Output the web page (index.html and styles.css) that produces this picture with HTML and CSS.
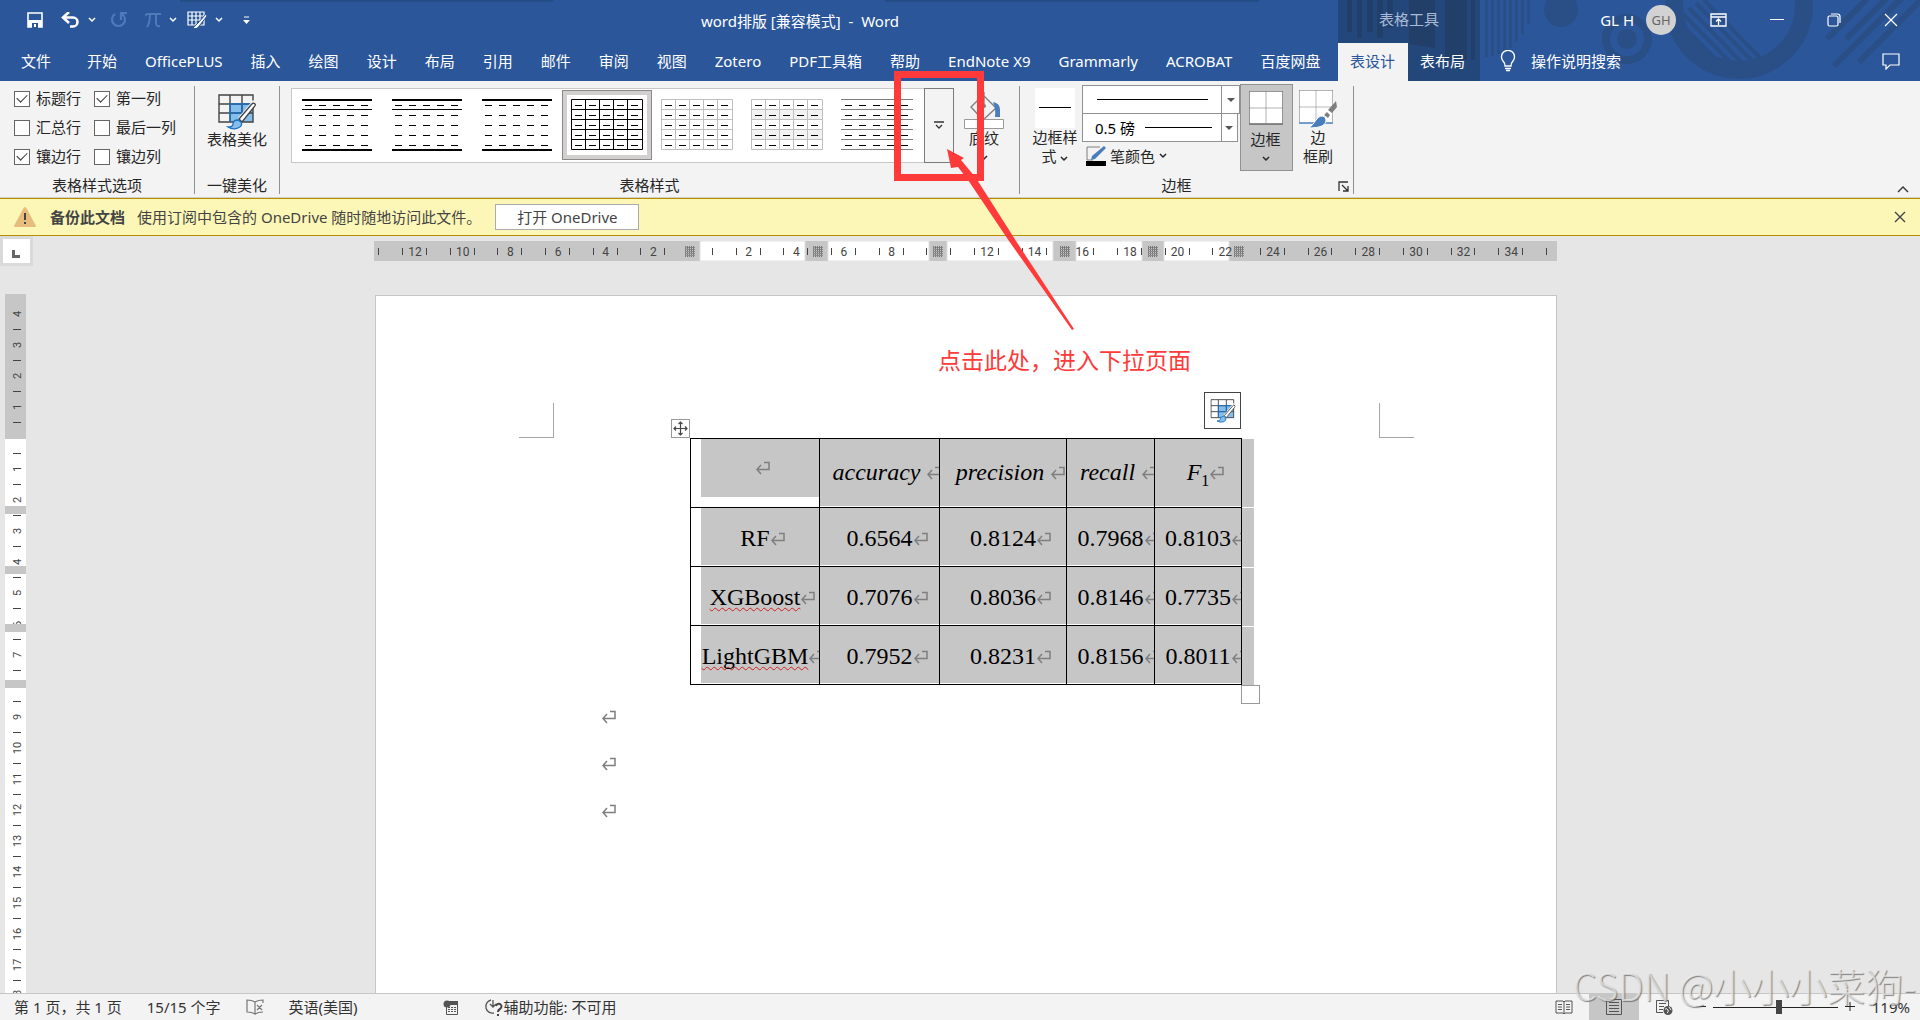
FILE: index.html
```html
<!DOCTYPE html>
<html lang="zh-CN">
<head>
    <meta charset="UTF-8">
    <meta name="viewport" content="width=device-width, initial-scale=1.0">
    <title>word排版 [兼容模式] - Word</title>
    <link rel="stylesheet" href="styles.css">
</head>
<body>
    <!-- Shared icon shapes -->
    <svg class="defs" aria-hidden="true">
        <symbol id="chev" viewBox="0 0 8 6"><path d="M1 1l3 3 3-3" fill="none" stroke="currentColor" stroke-width="1.5"/></symbol>
        <symbol id="dashes" viewBox="0 0 72 54"><path d="M4 7.500h63M4 17.500h63M4 27.500h63M4 37.500h63M4 47.500h63" stroke="#000" stroke-dasharray="7 7"/></symbol>
        <symbol id="mark" viewBox="0 0 16 14"><path d="M9 1.500h5v7H2M6 4L2 8.500l4 4.500" fill="none" stroke="#7f7f7f" stroke-width="1.500"/></symbol>
        <symbol id="beautify" viewBox="0 0 38 36">
            <path d="M12 10h23v18H12z" fill="#83beec"/>
            <path d="M1 1h34v27H1zM1 10h34M1 19h34M12 1v27M24 1v27" fill="none" stroke="#444" stroke-width="1.400"/>
            <path d="M12 28V10h23M24 10v10M12 19h12" fill="none" stroke="#1e70bd" stroke-width="1.400"/>
            <path d="M35 6L20 24l4 4L38 9z" fill="#f3f3f3"/>
            <path d="M37 10q-2-2-4 1L21 25l3 3L36 13q2-2 1-3z" fill="#fff" stroke="#444" stroke-width="1.300"/>
            <path d="M20 26q-5 0-5 4 0 3-5 3 5 3 10 1 5-2 3-6z" fill="#83beec" stroke="#1e70bd" stroke-width="1.300"/>
        </symbol>
    </svg>

    <header class="header">
        <svg class="header-art" viewBox="0 0 585 81" aria-hidden="true">
            <path class="context-bg" d="M3 0h142v81H3z"/>
            <g class="context-art">
                <path d="M12 0h5v32h-5zM22 0h5v38h-5zM32 0h6v32h-6zM42 0h6v38h-6zM62 0h38v48L74 44V0zM110 0h22v60h-22zM136 0h4v60h-4zM52 0h6v28h-6z"/>
            </g>
            <g class="art">
                <path d="M150 0h3v57h-3zM156 0h3v56h-3zM162 0h3v54h-3zM168 0h3v52h-3zM174 0h3v48h-3zM180 0h3v42h-3zM186 0h3v34h-3zM192 0h3v24h-3z"/>
                <circle cx="226" cy="10" r="17"/>
                <path fill-rule="evenodd" d="M267 39a25 25 0 1 0 50 0 25 25 0 1 0-50 0zM275 39a17 17 0 1 1 34 0 17 17 0 1 1-34 0z"/>
                <circle cx="292" cy="39" r="10"/>
            </g>
            <g class="art-lines">
                <circle cx="404" cy="5" r="65" stroke-width="18"/>
                <path stroke-width="4" d="M344 22l50 51M348 14l58 59M354 8l60 62M361 3l60 62M369 0l58 60"/>
                <path stroke-width="6" d="M492 39l40-40M511 39l40-40M499 66l68-68M524 62l62-62"/>
            </g>
        </svg>

        <div class="title-row">
            <div class="quick-access">
                <button aria-label="保存"><svg width="16" height="16" viewBox="0 0 16 16"><path d="M1 1h14v14H1z" fill="none" stroke="#fff" stroke-width="1.600"/><path d="M1 8h14v7H1z" fill="#fff"/><path d="M5 11h6v5H5z" fill="#2b579a"/><path d="M7 12h2v3H7z" fill="#fff"/></svg></button>
                <button class="undo" aria-label="撤消"><svg width="19" height="16" viewBox="0 0 19 16"><path d="M2 5.500h10a4.500 4.500 0 0 1 0 9H9M8 0L2 5.500 8 11" fill="none" stroke="#fff" stroke-width="2.600"/></svg><svg class="chev"><use href="#chev"/></svg></button>
                <button class="redo" aria-label="恢复"><svg width="17" height="17" viewBox="0 0 17 17"><path d="M5 3a6.500 6.500 0 1 0 7 0M11 9V2h6" fill="none" stroke="#4f79b8" stroke-width="2.200"/></svg></button>
                <button class="pi" aria-label="公式"><svg width="16" height="16" viewBox="0 0 16 16"><path d="M0 4q1-2 3-2h13M5 2q0 9-3 13M11 2v9q0 4 4 3" fill="none" stroke="#4f79b8" stroke-width="2"/></svg><svg class="chev"><use href="#chev"/></svg></button>
                <button class="grid-btn" aria-label="表格美化"><svg width="20" height="18" viewBox="0 0 20 18"><path d="M1 1h16v13H1zM1 5h16M1 9h16M5 1v13M9 1v13M13 1v13" fill="none" stroke="#fff" stroke-width="1.200"/><path d="M19 3l-8 9-5 5q4 2 7-3l7-9z" fill="#fff" stroke="#2b579a"/></svg><svg class="chev"><use href="#chev"/></svg></button>
                <button class="more" aria-label="自定义"><svg width="7" height="8" viewBox="0 0 7 8"><path d="M1 1h5" stroke="#fff"/><path d="M0 4h7L3.500 8z" fill="#fff"/></svg></button>
            </div>
            <h1 class="doc-title">word排版 [兼容模式]&nbsp; -&nbsp; Word</h1>
            <div class="context-title">表格工具</div>
            <div class="window-tools">
                <span class="user">GL H</span>
                <span class="avatar">GH</span>
                <button class="display-btn" aria-label="功能区显示选项"><svg width="17" height="14" viewBox="0 0 17 14"><path d="M1 1h15v12H1zM1 4h15M8.500 12V6M6 8.500L8.500 6 11 8.500" fill="none" stroke="#fff" stroke-width="1.300"/></svg></button>
                <button aria-label="最小化"><svg width="14" height="14" viewBox="0 0 14 14"><path d="M0 6.500h14" stroke="#fff"/></svg></button>
                <button aria-label="还原"><svg width="14" height="14" viewBox="0 0 14 14"><rect x="1" y="3" width="10" height="10" rx="1.500" fill="none" stroke="#fff" stroke-width="1.200"/><path d="M4 1h6.500q2.500 0 2.500 2.500V10" fill="none" stroke="#fff" stroke-width="1.200"/></svg></button>
                <button aria-label="关闭"><svg width="14" height="14" viewBox="0 0 14 14"><path d="M1 1l12 12M13 1L1 13" stroke="#fff" stroke-width="1.200"/></svg></button>
            </div>
        </div>

        <div class="tab-row">
            <nav class="tabs">
                <a class="file" href="#">文件</a>
                <a href="#">开始</a>
                <a href="#">OfficePLUS</a>
                <a href="#">插入</a>
                <a href="#">绘图</a>
                <a href="#">设计</a>
                <a href="#">布局</a>
                <a href="#">引用</a>
                <a href="#">邮件</a>
                <a href="#">审阅</a>
                <a href="#">视图</a>
                <a href="#">Zotero</a>
                <a href="#">PDF工具箱</a>
                <a href="#">帮助</a>
                <a href="#">EndNote X9</a>
                <a href="#">Grammarly</a>
                <a href="#">ACROBAT</a>
                <a href="#">百度网盘</a>
            </nav>
            <nav class="context-tabs">
                <a class="active" href="#">表设计</a>
                <a href="#">表布局</a>
            </nav>
            <div class="tell-me">
                <svg width="16" height="22" viewBox="0 0 16 22"><path d="M5 16q0-3-2-5a6.500 6.500 0 1 1 10 0q-2 2-2 5zM5 18.500h6M6 20.500h4" fill="none" stroke="#fff" stroke-width="1.400"/></svg>
                <a href="#">操作说明搜索</a>
                <button class="comment" aria-label="批注"><svg width="18" height="17" viewBox="0 0 18 17"><path d="M1 1h16v11H8l-4 4v-4H1z" fill="none" stroke="#fff" stroke-width="1.200"/></svg></button>
            </div>
        </div>
    </header>

    <section class="ribbon">
        <div class="group options">
            <div class="group-body checks">
                <label><input type="checkbox" checked>标题行</label>
                <label><input type="checkbox" checked>第一列</label>
                <label><input type="checkbox">汇总行</label>
                <label><input type="checkbox">最后一列</label>
                <label><input type="checkbox" checked>镶边行</label>
                <label><input type="checkbox">镶边列</label>
            </div>
            <div class="group-name">表格样式选项</div>
        </div>

        <div class="group beautify">
            <div class="group-body">
                <button class="big"><svg width="38" height="36"><use href="#beautify"/></svg><span>表格美化</span></button>
            </div>
            <div class="group-name">一键美化</div>
        </div>

        <div class="group styles">
            <div class="group-body">
                <div class="gallery">
                    <button aria-label="样式 1"><svg width="72" height="54"><use href="#dashes"/><path d="M1 2h70M1 52h70" stroke="#000" stroke-width="2"/><path d="M1 11.500h70" stroke="#000"/></svg></button>
                    <button aria-label="样式 2"><svg width="72" height="54"><use href="#dashes"/><path d="M1 2h70M1 52h70" stroke="#000" stroke-width="2"/><path d="M1 11.500h70" stroke="#000"/></svg></button>
                    <button aria-label="样式 3"><svg width="72" height="54"><use href="#dashes"/><path d="M1 2h70M1 52h70" stroke="#000" stroke-width="2"/></svg></button>
                    <button class="selected" aria-label="网格型"><svg width="72" height="54"><use href="#dashes"/><path d="M.5 1.500h71v50H.5zM.5 11.500h71M.5 21.500h71M.5 31.500h71M.5 41.500h71M14.500 1.500v50M28.500 1.500v50M42.500 1.500v50M56.500 1.500v50" fill="none" stroke="#000"/></svg></button>
                    <button aria-label="网格型浅色"><svg width="72" height="54"><use href="#dashes"/><path d="M.5 1.500h71v50H.5zM.5 11.500h71M.5 21.500h71M.5 31.500h71M.5 41.500h71M14.500 1.500v50M28.500 1.500v50M42.500 1.500v50M56.500 1.500v50" fill="none" stroke="#bfbfbf"/></svg></button>
                    <button aria-label="无格式表格 1"><svg width="72" height="54"><path d="M1 12h70v10H1zM1 32h70v10H1z" fill="#f2f2f2"/><use href="#dashes"/><path d="M.5 1.500h71v50H.5zM.5 11.500h71M.5 21.500h71M.5 31.500h71M.5 41.500h71M14.500 1.500v50M28.500 1.500v50M42.500 1.500v50M56.500 1.500v50" fill="none" stroke="#bfbfbf"/></svg></button>
                    <button aria-label="无格式表格 2"><svg width="72" height="54"><use href="#dashes"/><path d="M0 1.500h72M0 11.500h72M0 21.500h72M0 31.500h72M0 41.500h72M0 51.500h72" stroke="#7f7f7f"/></svg></button>
                    <button class="gallery-more" aria-label="其他"><svg width="10" height="10" viewBox="0 0 10 10"><path d="M0 1h10M2 4l3 3 3-3" fill="none" stroke="#333" stroke-width="1.300"/></svg></button>
                    <!-- Red box drawn over the "more" button -->
                    <div class="callout-box"></div>
                    <svg class="callout-arrow" width="134" height="184" viewBox="0 0 134 184" aria-hidden="true"><path d="M2 2l17 9-3 2 15 18 40 63 58 88-2 1-63-89-41-61-10-13-7 1z"/></svg>
                </div>
                <button class="big shading">
                    <svg width="40" height="38" viewBox="0 0 40 38"><path d="M19 4l13 13-13 12L7 16zM20 1v14" fill="none" stroke="#7f7f7f" stroke-width="1.400"/><circle cx="20" cy="15" r="2" fill="#7f7f7f"/><path d="M29 11q7 1 7 8v7h-5q1-8-2-15z" fill="#4a7ebb"/><path d="M.5 28.500h39v9H.5z" fill="#fff" stroke="#999"/></svg>
                    <span>底纹</span>
                    <svg class="chev"><use href="#chev"/></svg>
                </button>
            </div>
            <div class="group-name">表格样式</div>
        </div>

        <div class="group borders">
            <div class="group-body">
                <button class="big border-style">
                    <svg width="40" height="40" viewBox="0 0 40 40"><path d="M0 0h40v40H0z" fill="#fff"/><path d="M4 19.500h32" stroke="#000"/></svg>
                    <span>边框样<br>式 <svg class="chev"><use href="#chev"/></svg></span>
                </button>
                <div class="pen">
                    <div class="combo line-combo">
                        <select aria-label="笔样式"><option></option></select>
                    </div>
                    <div class="combo weight-combo">
                        <select aria-label="笔划粗细"><option>0.5 磅</option></select>
                    </div>
                    <button class="pen-color"><svg width="20" height="20" viewBox="0 0 20 20"><path d="M14 1H1v13h6" fill="none" stroke="#7f7f7f"/><path d="M18 0l2 2L9 13l-4 1 1-4z" fill="#4a7ebb"/><path d="M0 15h20v5H0z"/></svg>笔颜色<svg class="chev"><use href="#chev"/></svg></button>
                </div>
                <button class="big border-btn">
                    <svg width="34" height="34" viewBox="0 0 34 34"><path d="M1 1h32v32H1z" fill="#fff"/><path d="M.5.5h33M.5.5v32M33.500.5v32M17 .5v32M.5 17h33" stroke="#666" stroke-dasharray="1 1"/><path d="M0 33h34" stroke="#666" stroke-width="1.500"/></svg>
                    <span>边框</span>
                    <svg class="chev"><use href="#chev"/></svg>
                </button>
                <button class="big painter">
                    <svg width="38" height="38" viewBox="0 0 38 38"><path d="M1 1h32v32H1z" fill="#fff"/><path d="M.5.5h33M.5.5v32M33.500.5v32M17 .5v32M.5 17h33" stroke="#777" stroke-dasharray="1 1"/><path d="M0 33h34" stroke="#4a7ebb" stroke-width="1.500"/><path d="M37 11l-8 9 4 3 5-6zM28 22l3 3-2 3-4-3z" fill="#7f7f7f"/><path d="M10 38q4-3 7-8 4-6 9-3 3 6-3 9-4 2-13 2z" fill="#4a7ebb" stroke="#fff"/></svg>
                    <span>边<br>框刷</span>
                </button>
            </div>
            <div class="group-name">边框<button class="launcher" aria-label="边框设置"><svg width="11" height="11" viewBox="0 0 11 11"><path d="M1 10V1h9M4 4l6 6M10 5v5H5" fill="none" stroke="#333" stroke-width="1.300"/></svg></button></div>
        </div>
        <button class="collapse" aria-label="折叠功能区"><svg width="12" height="8" viewBox="0 0 12 8"><path d="M1 7l5-5 5 5" fill="none" stroke="#333" stroke-width="1.400"/></svg></button>
    </section>

    <section class="message-bar">
        <svg width="24" height="22" viewBox="0 0 24 22"><path d="M12 1q1 0 2 2l9 17q0 1-1 1H2q-1 0-1-1l9-17q1-2 2-2z" fill="#e8bc7c"/><path d="M12 7v7M12 16v2" stroke="#444" stroke-width="2"/></svg>
        <strong>备份此文档</strong>
        <span>使用订阅中包含的 OneDrive 随时随地访问此文件。</span>
        <button class="open-btn">打开 OneDrive</button>
        <button class="close-msg" aria-label="关闭"><svg width="12" height="12" viewBox="0 0 12 12"><path d="M1 1l10 10M11 1L1 11" stroke="#444" stroke-width="1.400"/></svg></button>
    </section>

    <main class="workspace">
        <div class="left-strip">
            <div class="tab-selector"><svg width="8" height="8" viewBox="0 0 8 8"><path d="M1.500 0v6.500H8" fill="none" stroke="#666" stroke-width="3"/></svg></div>
            <svg id="rulerV" width="21" height="720"></svg>
        </div>
        <div class="canvas">
            <svg id="rulerH" width="1184" height="20"></svg>
            <article class="page">
                <i class="crop crop-left"></i>
                <i class="crop crop-right"></i>
                <p class="note">点击此处，进入下拉页面</p>
                <div class="table-wrap">
                    <div class="move-handle"><svg width="15" height="15" viewBox="0 0 15 15"><path d="M7.500 1v13M1 7.500h13M5.500 3l2-2 2 2M5.500 12l2 2 2-2M3 5.500l-2 2 2 2M12 5.500l2 2-2 2" fill="none" stroke="#444" stroke-width="1.200"/></svg></div>
                    <button class="quick-format" aria-label="表格美化"><svg width="26" height="24" viewBox="0 0 38 36"><use href="#beautify"/></svg></button>
                    <table>
                        <tr class="head">
                            <th><svg class="mark"><use href="#mark"/></svg></th>
                            <th><i>accuracy</i> <svg class="mark"><use href="#mark"/></svg></th>
                            <th><i>precision</i> <svg class="mark"><use href="#mark"/></svg></th>
                            <th><i>recall</i> <svg class="mark"><use href="#mark"/></svg></th>
                            <th><i>F</i><sub>1</sub><svg class="mark"><use href="#mark"/></svg></th>
                        </tr>
                        <tr>
                            <td>RF<svg class="mark"><use href="#mark"/></svg></td>
                            <td>0.6564<svg class="mark"><use href="#mark"/></svg></td>
                            <td>0.8124<svg class="mark"><use href="#mark"/></svg></td>
                            <td>0.7968<svg class="mark"><use href="#mark"/></svg></td>
                            <td>0.8103<svg class="mark"><use href="#mark"/></svg></td>
                        </tr>
                        <tr>
                            <td><span class="typo">XGBoost</span><svg class="mark"><use href="#mark"/></svg></td>
                            <td>0.7076<svg class="mark"><use href="#mark"/></svg></td>
                            <td>0.8036<svg class="mark"><use href="#mark"/></svg></td>
                            <td>0.8146<svg class="mark"><use href="#mark"/></svg></td>
                            <td>0.7735<svg class="mark"><use href="#mark"/></svg></td>
                        </tr>
                        <tr>
                            <td><span class="typo">LightGBM</span><svg class="mark"><use href="#mark"/></svg></td>
                            <td>0.7952<svg class="mark"><use href="#mark"/></svg></td>
                            <td>0.8231<svg class="mark"><use href="#mark"/></svg></td>
                            <td>0.8156<svg class="mark"><use href="#mark"/></svg></td>
                            <td>0.8011<svg class="mark"><use href="#mark"/></svg></td>
                        </tr>
                    </table>
                    <div class="row-ends"></div>
                    <div class="resize-handle"></div>
                </div>
                <p class="empty"><svg class="mark"><use href="#mark"/></svg></p>
                <p class="empty"><svg class="mark"><use href="#mark"/></svg></p>
                <p class="empty"><svg class="mark"><use href="#mark"/></svg></p>
            </article>
        </div>
    </main>

    <footer class="status-bar">
        <span>第 1 页，共 1 页</span>
        <span>15/15 个字</span>
        <svg width="18" height="16" viewBox="0 0 18 16"><path d="M9 3Q6 1 1 1v12q5 0 8 2V3q3-2 8-2v3M9 15q3-2 8-2M11 6l5 5M16 6l-5 5" fill="none" stroke="#777" stroke-width="1.200"/></svg>
        <span>英语(美国)</span>
        <svg class="macro" width="16" height="15" viewBox="0 0 16 15"><path d="M3.500 5v9.500h11V1.500H7" fill="none" stroke="#555"/><path d="M6 1h9v4H6z" fill="#555"/><circle cx="4" cy="4" r="3.500" fill="#555"/><path d="M5 7.500h8M5 9.500h8M5 11.500h8" stroke="#555" stroke-dasharray="2 1"/></svg>
        <span class="access"><svg width="20" height="17" viewBox="0 0 20 17"><path d="M7 1a6.500 6.500 0 1 0 3 13M9 1v6M6 5l3 3 3-3" fill="none" stroke="#555" stroke-width="1.300"/><path d="M12 7q1-3 4-2 3 2 0 5-2 1-2 3M14 15v2" fill="none" stroke="#444" stroke-width="2"/></svg>辅助功能: 不可用</span>
        <div class="views">
            <button aria-label="阅读视图"><svg width="18" height="15" viewBox="0 0 18 15"><path d="M1 1h7l1 1 1-1h7v12h-7l-1 1-1-1H1zM9 2v12M3 4.500h4M3 7h4M3 9.500h4M11 4.500h4M11 7h4M11 9.500h4" fill="none" stroke="#555"/></svg></button>
            <button class="current" aria-label="页面视图"><svg width="18" height="16" viewBox="0 0 18 16"><path d="M1.500.5h15v15h-15zM4 3.500h10M4 6.500h10M4 9.500h10M4 12.500h10" fill="none" stroke="#555"/></svg></button>
            <button aria-label="Web 版式视图"><svg width="18" height="15" viewBox="0 0 18 15"><path d="M8 12.500H1.500V.5h12V6M4 3.500h7M4 6.500h5M4 9.500h4" fill="none" stroke="#555"/><circle cx="13" cy="10.500" r="4.500" fill="#555"/><path d="M10 9q2-1 3 1t-1 3M14 7l2 3" fill="none" stroke="#f3f3f3"/></svg></button>
            <button class="zoom-btn" aria-label="缩小"><svg width="10" height="10" viewBox="0 0 10 10"><path d="M0 4.500h10" stroke="#222"/></svg></button>
            <input type="range" min="0" max="100" value="53" aria-label="缩放">
            <button class="zoom-btn" aria-label="放大"><svg width="10" height="10" viewBox="0 0 10 10"><path d="M0 4.500h10M5 0v9" stroke="#222"/></svg></button>
            <span class="percent">119%</span>
        </div>
    </footer>
    <div class="watermark">CSDN @小小小菜狗-</div>

    <script>
        const NS = 'http://www.w3.org/2000/svg';

        function add(parent, name, attrs, text) {
            const el = document.createElementNS(NS, name);
            for (const key in attrs) el.setAttribute(key, attrs[key]);
            if (text !== undefined) el.textContent = text;
            parent.appendChild(el);
        }

        // Horizontal ruler, zero is the left edge of the first column text
        const h = document.getElementById('rulerH');
        const zeroH = 327;
        const unitH = 23.83;
        add(h, 'rect', { width: 1183, height: 20, fill: '#c6c6c6' });
        [[326, 105], [454, 101], [573, 106], [702, 66], [790, 65]].forEach(([x, w]) => {
            add(h, 'rect', { x: x, y: 0, width: w, height: 20, fill: '#fff', stroke: '#e0e0e0' });
        });
        const columns = [316, 444, 564, 691, 779, 865];
        for (let n = -14; n < 36; n++) {
            const tick = Math.round(zeroH + (n + 0.5) * unitH) - 1;
            // ticks under a column marker are hidden
            const hidden = columns.some(c => Math.abs(c - tick) < 11);
            if (n !== -1 && tick > 0 && tick < 1182 && !hidden) {
                add(h, 'rect', { x: tick, y: 7, width: 1, height: 7, fill: '#444' });
            }
            const x = zeroH + n * unitH;
            if (n % 2 === 0 && n !== 0 && n !== -14 && n !== 10) {
                add(h, 'text', { x: x, y: 15, 'text-anchor': 'middle' }, Math.abs(n));
            }
        }
        columns.forEach(x => {
            for (let i = 0; i < 5; i++) {
                add(h, 'path', { d: `M${x - 5 + i * 2 + 0.5} 5v11`, stroke: '#777' });
                add(h, 'path', { d: `M${x - 5} ${6.5 + i * 2}h10`, stroke: '#8c8c8c', 'stroke-width': 1 });
            }
        });

        // Vertical ruler
        const v = document.getElementById('rulerV');
        add(v, 'rect', { width: 21, height: 720, fill: '#fff' });
        add(v, 'rect', { width: 21, height: 145, fill: '#c6c6c6' });
        for (let n = -4; n < 19; n++) {
            const y = 144 + n * 31;
            if (n !== 0 && n !== 8) {
                add(v, 'text', { transform: `translate(16 ${y}) rotate(-90)`, 'text-anchor': 'middle' }, Math.abs(n));
            }
            add(v, 'rect', { x: 8, y: y + 15, width: 8, height: 1, fill: '#444' });
        }
        [212, 272, 330, 386].forEach(y => add(v, 'rect', { x: 0, y: y, width: 21, height: 8, fill: '#c6c6c6' }));
    </script>
</body>
</html>
```
FILE: styles.css
```css
/* Base */
* {
    box-sizing: border-box;
}

body {
    margin: 0;
    height: 100vh;
    display: flex;
    flex-direction: column;
    overflow: hidden;
    background: #e6e6e6;
    color: #333;
    font-family: "Noto Sans", "Noto Sans CJK SC", sans-serif;
    font-size: 15px;
    line-height: 20px;
}

button {
    display: flex;
    align-items: center;
    padding: 0;
    border: none;
    background: none;
    color: inherit;
    font: inherit;
}

a {
    color: inherit;
    text-decoration: none;
}

.defs {
    position: absolute;
    width: 0;
    height: 0;
}

.chev {
    width: 8px;
    height: 6px;
}

/* Header */
.header {
    position: relative;
    flex: none;
    background: #2b579a;
    color: #fff;
}

.header::before,
.header::after {
    content: "";
    position: absolute;
    top: 0;
    left: 180px;
    width: 374px;
    height: 3px;
    background: linear-gradient(#234a80, #2b579a);
}

.header::after {
    left: 885px;
}

.header-art {
    position: absolute;
    top: 0;
    right: 0;
    width: 585px;
    height: 81px;
}

.context-bg {
    fill: #24477b;
}

.context-art {
    fill: #223f69;
}

.art {
    fill: #2a4f87;
}

.art-lines {
    fill: none;
    stroke: #2a4f87;
}

.title-row,
.tab-row {
    position: relative;
    display: flex;
    align-items: center;
    height: 43px;
}

.tab-row {
    height: 38px;
}

.quick-access {
    display: flex;
    align-items: center;
    width: 262px;
    padding: 0 0 4px 27px;
}

.quick-access button {
    gap: 8px;
}

.quick-access .undo {
    margin-left: 18px;
}

.quick-access .redo {
    margin-left: 14px;
}

.quick-access .pi {
    margin-left: 18px;
}

.quick-access .grid-btn {
    margin-left: 10px;
}

.quick-access .more {
    margin-left: 20px;
}

.doc-title {
    flex: 1;
    margin: 0;
    padding-bottom: 2px;
    font-size: 15px;
    font-weight: 400;
    text-align: center;
}

.context-title {
    width: 142px;
    padding-bottom: 6px;
    color: #a9bbd6;
    text-align: center;
}

.window-tools {
    display: flex;
    align-items: center;
    justify-content: flex-end;
    gap: 43px;
    width: 440px;
    padding: 0 22px 4px 0;
}

.user {
    margin-right: -31px;
}

.avatar {
    width: 30px;
    height: 30px;
    margin-right: -9px;
    border-radius: 50%;
    background: #d2d2d2;
    color: #666;
    font-size: 13px;
    line-height: 30px;
    text-align: center;
}

.tabs {
    flex: 1;
    display: flex;
    gap: 28px;
    padding: 0 0 2px 21px;
    white-space: nowrap;
}

.tabs .file {
    margin-right: 8px;
}

.context-tabs {
    display: flex;
    width: 142px;
    line-height: 36px;
}

.context-tabs a {
    height: 38px;
    padding: 0 12px;
}

.context-tabs .active {
    width: 70px;
    background: #f3f3f3;
    color: #2b579a;
}

.tell-me {
    display: flex;
    align-items: center;
    gap: 15px;
    width: 440px;
    padding: 0 20px 2px;
}

.comment {
    margin-left: auto;
}

/* Ribbon */
.ribbon {
    position: relative;
    flex: none;
    display: flex;
    height: 117px;
    padding: 5px 0 3px;
    border-bottom: 1px solid #d2d0ce;
    background: #f3f3f3;
    color: #262626;
}

.group {
    display: flex;
    flex-direction: column;
    justify-content: space-between;
    border-right: 1px solid #919191;
}

.group-body {
    display: flex;
    align-items: flex-start;
    height: 87px;
}

.group-name {
    position: relative;
    height: 18px;
    line-height: 18px;
    text-align: center;
}

.group-name .launcher {
    position: absolute;
    right: 4px;
    bottom: 2px;
}

.options {
    width: 195px;
}

.checks {
    display: grid;
    grid-template-columns: 80px 1fr;
    align-content: start;
    padding-left: 14px;
    line-height: 25px;
    row-gap: 4px;
}

.checks label {
    display: flex;
    align-items: center;
    gap: 6px;
    white-space: nowrap;
}

.checks input {
    display: grid;
    place-items: center;
    appearance: none;
    width: 16px;
    height: 16px;
    margin: 0;
    border: 1px solid #666;
    background: #fff;
}

.checks input:checked::before {
    content: "";
    width: 9px;
    height: 5px;
    margin-bottom: 3px;
    border: solid #333;
    border-width: 0 0 1px 1px;
    transform: rotate(-45deg);
}

.beautify {
    width: 85px;
}

.big {
    flex-direction: column;
    line-height: 19px;
}

.beautify .big {
    width: 86px;
    padding-top: 8px;
}

.styles {
    width: 740px;
}

.styles .group-body {
    padding: 2px 0 0 11px;
}

.gallery {
    position: relative;
    display: flex;
    height: 75px;
    border: 1px solid #c8c8c8;
    background: #fff;
}

.gallery button {
    justify-content: center;
    width: 90px;
    height: 71px;
}

.gallery .selected {
    margin-top: 1px;
    height: 70px;
    border: 1px solid #8a8a8a;
    box-shadow: inset 0 0 0 4px #d2d0ce;
}

.gallery .gallery-more {
    width: 30px;
    height: 75px;
    margin: -1px -1px 0 2px;
    border: 1px solid #7a7a7a;
    background: #f3f3f3;
}

.callout-box {
    position: absolute;
    z-index: 3;
    top: -18px;
    right: -31px;
    width: 90px;
    height: 110px;
    border: 7px solid #fe3a3a;
}

.callout-arrow {
    position: absolute;
    z-index: 4;
    top: 58px;
    left: 653px;
    fill: #fe3a3a;
}

.shading {
    margin-left: 10px;
    padding-top: 3px;
}

.shading .chev,
.border-btn .chev {
    margin-top: 7px;
}

.borders {
    width: 334px;
}

.borders .group-name {
    padding-right: 20px;
}

.border-style {
    width: 62px;
    padding: 2px 0 0 8px;
}

.pen {
    width: 158px;
}

.combo {
    position: relative;
    width: 158px;
    height: 29px;
    margin-top: -1px;
    border: 1px solid #919191;
    background: #fff;
}

.combo::after {
    content: "";
    position: absolute;
    top: 12px;
    right: 4px;
    border: 4px solid transparent;
    border-top-color: #555;
    pointer-events: none;
}

.combo select {
    appearance: none;
    width: 139px;
    height: 27px;
    padding: 0 0 0 12px;
    border: none;
    border-right: 1px solid #919191;
    border-radius: 0;
    background: linear-gradient(#000, #000) 14px 13px / 111px 1px no-repeat;
    color: #000;
    font: inherit;
}

.combo.weight-combo {
    width: 156px;
}

.weight-combo select {
    background-position: 62px 13px;
    background-size: 67px 1px;
}

.pen-color {
    gap: 4px;
    padding: 4px 0 0 4px;
}

.border-btn {
    width: 53px;
    height: 87px;
    margin-top: -2px;
    padding: 6px 2px 0 0;
    border: 1px solid #919191;
    background: #c6c6c6;
}

.border-btn span {
    margin-top: 5px;
}

.painter {
    width: 50px;
    padding-top: 4px;
}

.collapse {
    position: absolute;
    right: 11px;
    bottom: 4px;
}

/* Message bar */
.message-bar {
    flex: none;
    display: flex;
    align-items: center;
    height: 38px;
    padding: 0 14px 0 13px;
    border: solid #b48e00;
    border-width: 1px 0;
    background: #fcf7b6;
    color: #444;
    line-height: 18px;
    white-space: nowrap;
}

.message-bar strong {
    margin: 0 12px 0 13px;
}

.open-btn {
    justify-content: center;
    width: 144px;
    height: 26px;
    margin-left: 14px;
    border: 1px solid #ababab;
    background: #fff;
}

.close-msg {
    margin-left: auto;
}

/* Rulers and page */
.workspace {
    flex: 1;
    display: flex;
    min-height: 0;
    padding-right: 21px;
    overflow: hidden;
}

.workspace text {
    fill: #444;
    font-family: Roboto, sans-serif;
    font-size: 12px;
}

#rulerV text {
    font-size: 11px;
}

.left-strip {
    flex: none;
    width: 33px;
}

.tab-selector {
    display: flex;
    align-items: center;
    justify-content: center;
    height: 30px;
    margin-bottom: 28px;
    padding: 6px 2px 0 0;
    border: 3px solid #dadada;
    background: #fff;
}

#rulerV {
    display: block;
    margin-left: 5px;
}

.canvas {
    flex: 1;
    display: flex;
    flex-direction: column;
    align-items: center;
    padding-top: 5px;
}

#rulerH {
    flex: none;
}

.page {
    position: relative;
    flex: 1;
    width: 1182px;
    max-width: 100%;
    margin-top: 34px;
    padding: 50px 178px 0;
    border: 1px solid #c6c6c6;
    border-bottom: none;
    background: #fff;
}

.crop {
    position: absolute;
    top: 107px;
    width: 35px;
    height: 35px;
    border: solid #a6a6a6;
    border-width: 0 1px 1px 0;
}

.crop-left {
    left: 143px;
}

.crop-right {
    right: 142px;
    border-width: 0 0 1px 1px;
}

.note {
    margin: 0 0 64px 384px;
    color: #fe3a3a;
    font-size: 23px;
    line-height: 28px;
    white-space: nowrap;
}

.table-wrap {
    position: relative;
    width: 551px;
    margin-left: 136px;
}

table {
    width: 551px;
    table-layout: fixed;
    border-collapse: collapse;
    color: #000;
    font-family: "Liberation Serif", serif;
    font-size: 24px;
    line-height: 28px;
}

th,
td {
    width: 127px;
    height: 59px;
    padding: 2px 0 0;
    border: 1px solid #000;
    background: #c6c6c6;
    box-shadow: inset 0 -1px #fff;
    font-weight: 400;
    text-align: center;
    white-space: nowrap;
    overflow: hidden;
}

th {
    height: 69px;
    padding: 0 0 2px;
}

th:nth-child(2) {
    width: 120px;
}

th:nth-child(4) {
    width: 88px;
}

th:nth-child(5) {
    width: 87px;
}

th:first-child,
td:first-child {
    width: 129px;
    background: linear-gradient(#c6c6c6, #c6c6c6) 10px 0 no-repeat #fff;
}

th:first-child {
    padding-bottom: 12px;
    background-size: 100% 58px;
}

sub {
    font-size: 16px;
    line-height: 0;
}

.typo {
    text-decoration: underline wavy #d02020 1px;
    text-decoration-skip-ink: none;
    text-underline-offset: 2px;
}

.mark {
    width: 16px;
    height: 14px;
    margin-right: -16px;
}

.row-ends {
    position: absolute;
    top: 1px;
    left: 552px;
    width: 12px;
    height: 246px;
    background: linear-gradient(#fff, #fff) 0 68px / 13px 1px no-repeat,
        linear-gradient(#fff, #fff) 0 128px / 13px 1px no-repeat,
        linear-gradient(#fff, #fff) 0 187px / 13px 1px no-repeat,
        #c6c6c6;
}

.move-handle,
.resize-handle {
    position: absolute;
    display: flex;
    width: 19px;
    height: 19px;
    padding: 1px;
    border: 1px solid #999;
    background: #fff;
}

.move-handle {
    top: -19px;
    left: -19px;
}

.resize-handle {
    top: 100%;
    left: 100%;
}

.quick-format {
    position: absolute;
    top: -46px;
    right: 0;
    justify-content: center;
    width: 37px;
    height: 37px;
    border: 1px solid #444;
    background: #fff;
}

.empty {
    display: flex;
    align-items: center;
    height: 47px;
    margin: 0;
    padding-left: 47px;
}

.table-wrap + .empty {
    margin-top: 8px;
}

/* Status bar */
.status-bar {
    flex: none;
    display: flex;
    align-items: center;
    gap: 25px;
    height: 27px;
    padding: 0 10px 0 14px;
    border-top: 1px solid #c6c6c6;
    background: #f3f3f3;
    white-space: nowrap;
}

.macro {
    margin-left: 60px;
}

.access {
    display: flex;
    align-items: center;
}

.views {
    display: flex;
    align-items: center;
    margin-left: auto;
}

.views button {
    justify-content: center;
    width: 50px;
    height: 26px;
}

.views .current {
    background: #c6c6c6;
}

.views .zoom-btn {
    width: 24px;
}

.views input {
    appearance: none;
    width: 125px;
    height: 14px;
    margin: 0;
    background: linear-gradient(#222, #222) 0 7px / 100% 1px no-repeat;
}

.views input::-webkit-slider-thumb {
    appearance: none;
    width: 6px;
    height: 14px;
    background: #444;
}

.percent {
    width: 40px;
    margin-left: 8px;
    text-align: right;
}

.watermark {
    position: absolute;
    right: 4px;
    bottom: 9px;
    color: rgba(240, 240, 240, 0.7);
    font-family: "Noto Sans CJK SC", sans-serif;
    font-size: 38px;
    font-weight: 300;
    line-height: 52px;
    text-shadow: 1px 1px 1px rgba(90, 90, 90, 0.7);
    pointer-events: none;
}
```
